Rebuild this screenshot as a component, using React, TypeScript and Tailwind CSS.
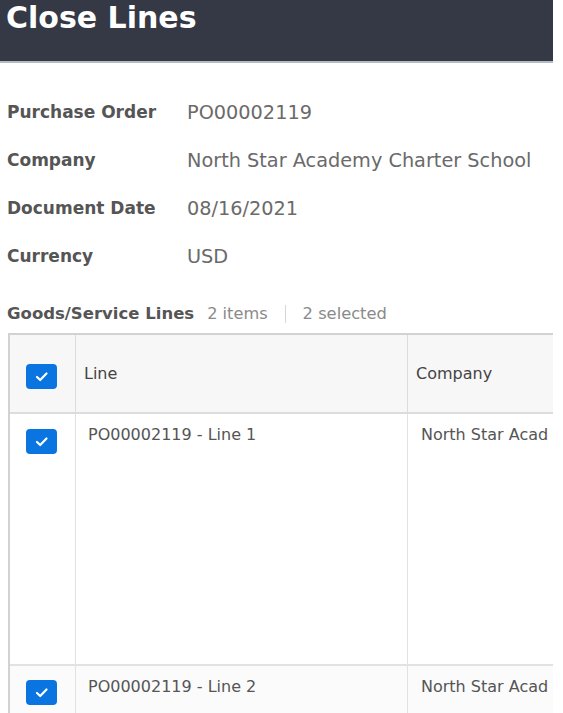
import React from "react";

function Check() {
  return (
    <div className="w-[31px] h-[25px] rounded-[4px] bg-[#0a74e0] flex items-center justify-center">
      <svg width="31" height="25" viewBox="0 0 31 25">
        <path d="M11 13 L14.2 16 L20.5 9.5" fill="none" stroke="#ffffff" strokeWidth="2.2" strokeLinecap="round" strokeLinejoin="round" />
      </svg>
    </div>
  );
}

const fields: [string, string][] = [
  ["Purchase Order", "PO00002119"],
  ["Company", "North Star Academy Charter School"],
  ["Document Date", "08/16/2021"],
  ["Currency", "USD"],
];

export default function App() {
  return (
    <div className="w-[553px] overflow-hidden bg-white font-['DejaVu_Sans',sans-serif]">
      <div className="h-[63px] bg-[#353946] border-b-2 border-[#b6bac4] pl-[6px]">
        <h1 className="text-[30px] leading-[36px] font-bold text-white">Close Lines</h1>
      </div>

      <div className="pt-[26px] pl-[7px] grid grid-cols-[180px_1fr]">
        {fields.map(([k, v]) => (
          <React.Fragment key={k}>
            <div className="h-[48px] flex items-center text-[17px] font-bold text-[#555555]">{k}</div>
            <div className="h-[48px] flex items-center text-[19.3px] text-[#6a6a6a]">{v}</div>
          </React.Fragment>
        ))}
      </div>

      <div className="mt-[21px] pl-[7px] h-[24px] flex items-center">
        <span className="text-[16.5px] font-bold text-[#555555]">Goods/Service Lines</span>
        <span className="ml-[13px] text-[16.2px] text-[#8a8a8a]">2 items</span>
        <span className="mx-[17px] w-px h-[18px] bg-[#d6d6d6]" />
        <span className="text-[16.3px] text-[#8a8a8a]">2 selected</span>
      </div>

      <div className="mt-[7px] ml-[8px] w-[545px] overflow-hidden border-l-2 border-t-2 border-[#d2d2d2]">
        <div className="grid grid-cols-[66px_332px_145px]">
          {/* header */}
          <div className="h-[79px] bg-[#f7f7f7] border-r border-b-2 border-[#dcdcdc] pl-[16px] pt-[29px]">
            <Check />
          </div>
          <div className="h-[79px] bg-[#f7f7f7] border-r border-b-2 border-[#dcdcdc] pl-[8px] flex items-center text-[16px] text-[#444444]">
            Line
          </div>
          <div className="h-[79px] bg-[#f7f7f7] border-b-2 border-[#dcdcdc] pl-[8px] flex items-center text-[16px] text-[#444444]">
            Company
          </div>

          {/* row 1 */}
          <div className="h-[252px] bg-white border-r border-b-2 border-[#e2e2e2] pl-[16px] pt-[15px]">
            <Check />
          </div>
          <div className="h-[252px] bg-white border-r border-b-2 border-[#e2e2e2] pl-[12px] pt-[9px] text-[16px] leading-[24px] text-[#555555]">
            PO00002119 - Line 1
          </div>
          <div className="h-[252px] bg-white border-b-2 border-[#e2e2e2] pl-[13px] pt-[9px] text-[16px] leading-[24px] text-[#555555] whitespace-nowrap">
            North Star Acad
          </div>

          {/* row 2 */}
          <div className="h-[120px] bg-[#fbfbfb] border-r border-[#e2e2e2] pl-[16px] pt-[14px]">
            <Check />
          </div>
          <div className="h-[120px] bg-[#fbfbfb] border-r border-[#e2e2e2] pl-[12px] pt-[9px] text-[16px] leading-[24px] text-[#555555]">
            PO00002119 - Line 2
          </div>
          <div className="h-[120px] bg-[#fbfbfb] pl-[13px] pt-[9px] text-[16px] leading-[24px] text-[#555555] whitespace-nowrap">
            North Star Acad
          </div>
        </div>
      </div>
    </div>
  );
}
